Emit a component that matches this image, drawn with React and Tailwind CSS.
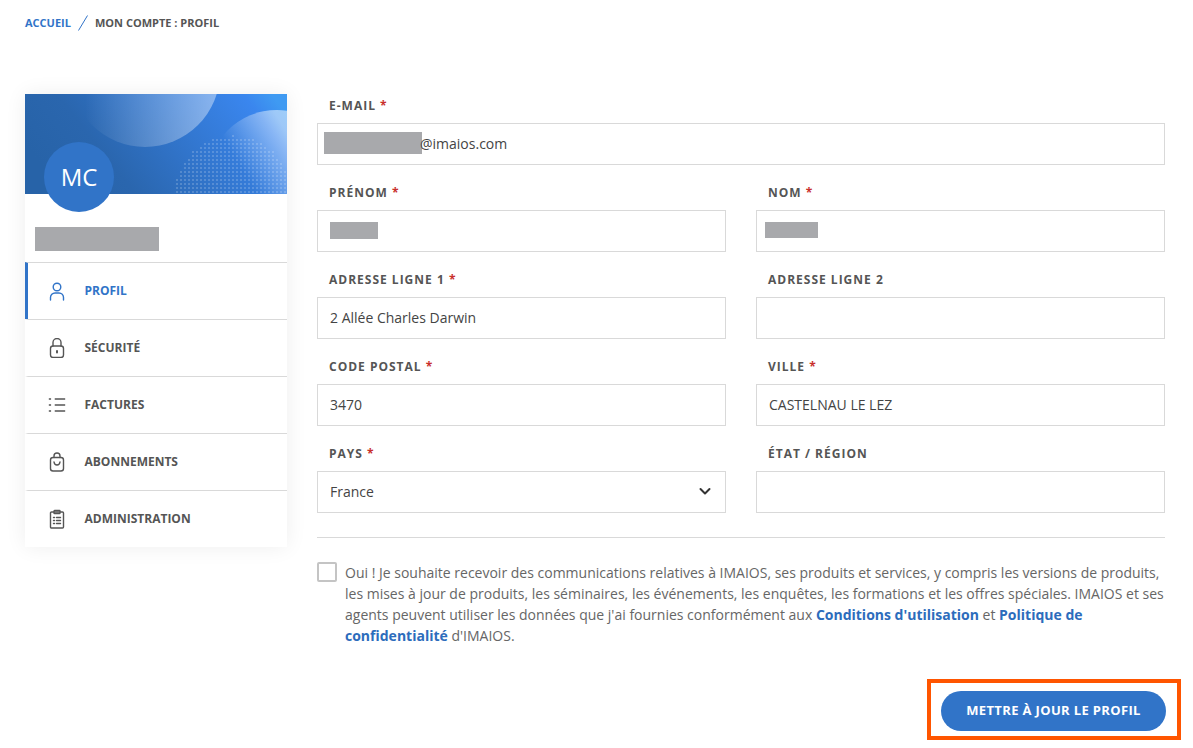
const font = { fontFamily: '"Open Sans", sans-serif' };

function Label({ children, required }) {
  return (
    <label className="block h-[17px] mb-[9px] ml-3 text-[12px] leading-[17px] font-bold tracking-[1px] text-[#555]">
      {children}
      {required && <span className="text-[#c9302c]"> *</span>}
    </label>
  );
}

function Field({ label, required, value, children, className = "" }) {
  return (
    <div className={className}>
      <Label required={required}>{label}</Label>
      <div className="flex items-center justify-between h-[42px] border border-[#d9d9d9] pl-3 pr-[13px] pb-[2px] text-[14px] text-[#444]">
        {value}
        {children}
      </div>
    </div>
  );
}

function Redacted({ className }) {
  return <span className={"block bg-[#a8a9ac] " + className} />;
}

function Banner() {
  const dots = [];
  for (let x = 177; x <= 287; x += 4) {
    for (let y = 136; y <= 194; y += 4) {
      const dx = x - 233;
      const dy = y - 194;
      if (dx * dx + dy * dy <= 58 * 58) {
        dots.push(<circle key={x + "-" + y} cx={x - 25} cy={y - 94} r="0.7" fill="#fff" fillOpacity="0.5" />);
      }
    }
  }
  return (
    <svg width="262" height="100" viewBox="0 0 262 100" className="block">
      <defs>
        <linearGradient id="bg" x1="0" y1="0.5" x2="1" y2="0.2">
          <stop offset="0" stopColor="#2763a8" />
          <stop offset="0.25" stopColor="#2a66ae" />
          <stop offset="0.9" stopColor="#3a86ee" />
          <stop offset="1" stopColor="#3f9af2" />
        </linearGradient>
        <linearGradient id="c1" x1="0" y1="0" x2="1" y2="0">
          <stop offset="0.1" stopColor="#fff" stopOpacity="0" />
          <stop offset="1" stopColor="#fff" stopOpacity="0.42" />
        </linearGradient>
        <linearGradient id="c2" x1="0" y1="0.8" x2="1" y2="0.2">
          <stop offset="0.35" stopColor="#fff" stopOpacity="0" />
          <stop offset="0.7" stopColor="#fff" stopOpacity="0.5" />
        </linearGradient>
      </defs>
      <rect width="262" height="100" fill="url(#bg)" />
      <circle cx="120" cy="-22" r="75" fill="url(#c1)" />
      <circle cx="252" cy="86" r="70" fill="url(#c2)" />
      {dots}
    </svg>
  );
}

const IconProps = {
  width: 20,
  height: 20,
  viewBox: "0 0 20 20",
  fill: "none",
  stroke: "currentColor",
  strokeWidth: 1.4,
  strokeLinecap: "round",
  strokeLinejoin: "round",
};

const menu = [
  {
    name: "PROFIL",
    icon: (
      <svg {...IconProps}>
        <circle cx="10" cy="6" r="3.800" />
        <path d="M3.500 19v-2.500a4.500 4.500 0 0 1 4.500-4.500h4a4.500 4.500 0 0 1 4.500 4.500V19" />
      </svg>
    ),
  },
  {
    name: "SÉCURITÉ",
    icon: (
      <svg {...IconProps}>
        <rect x="3.500" y="8" width="13" height="11.500" rx="2.500" />
        <path d="M6 8V4.500a4 4 0 0 1 8 0V8" />
        <path d="M10 13v1.500" strokeWidth="2" />
      </svg>
    ),
  },
  {
    name: "FACTURES",
    icon: (
      <svg {...IconProps} width="22" viewBox="0 0 22 20">
        <path d="M8.500 3.500H20M8.500 10H20M8.500 16.500H20" strokeWidth="1.700" strokeLinecap="butt" />
        <path d="M2 3.500h2.500M2 10h2.500M2 16.500h2.500" strokeWidth="1.700" strokeLinecap="butt" />
      </svg>
    ),
  },
  {
    name: "ABONNEMENTS",
    icon: (
      <svg {...IconProps}>
        <rect x="3.500" y="5.500" width="13" height="13.500" rx="2.500" />
        <path d="M7 5.500V4a3 3 0 0 1 6 0v1.500" />
        <path d="M7 10c.5 4 5.500 4 6 0" />
      </svg>
    ),
  },
  {
    name: "ADMINISTRATION",
    icon: (
      <svg {...IconProps}>
        <rect x="3.500" y="3" width="13" height="16" rx="1" />
        <rect x="7" y="1.500" width="6" height="3" rx="0.500" />
        <path d="M6.500 8.500h1M6.500 11.500h1M6.500 14.500h1M9.500 8.500h4M9.500 11.500h4M9.500 14.500h4" />
      </svg>
    ),
  },
];

function Sidebar() {
  return (
    <aside className="w-[262px] h-[453px] shrink-0 bg-white shadow-[0_0_20px_rgba(0,0,0,0.07)]">
      <div className="h-[100px] overflow-hidden">
        <Banner />
      </div>
      <div className="h-[68px] px-[10px] pt-[33px]">
        <Redacted className="w-[124px] h-[24px]" />
      </div>
      {menu.map((item, i) => (
        <div
          key={item.name}
          className={
            "flex items-center h-[57px] border-t border-[#d9d9d9] text-[12px] font-bold " +
            (i === 0 ? "border-l-[3px] border-l-[#3174c8] text-[#3174c8]" : "border-l-[3px] border-l-transparent text-[#555]")
          }
        >
          <span className="w-[20px] ml-[19px] flex justify-center">{item.icon}</span>
          <span className="ml-[17.5px]">{item.name}</span>
        </div>
      ))}
    </aside>
  );
}

export default function App() {
  return (
    <div style={font} className="relative w-[1193px] h-[748px] overflow-hidden bg-white pl-[25px]">
      <nav className="flex items-center h-[46px] text-[11px] font-bold">
        <a className="text-[#3174c8]">ACCUEIL</a>
        <svg width="10" height="16" viewBox="0 0 10 16" className="mx-[7px]">
          <path d="M0.500 15.500L9.500 0.500" stroke="#3174c8" strokeWidth="1" />
        </svg>
        <span className="text-[#555]">MON COMPTE : PROFIL</span>
      </nav>

      <div className="flex gap-[30px] pt-[48px]">
        <div className="relative">
          <Sidebar />
          <div className="absolute left-[19px] top-[48px] w-[70px] h-[70px] rounded-full bg-[#3174c8] flex items-center justify-center text-white text-[24px]">
            MC
          </div>
        </div>

        <form className="w-[848px] mt-[3px]">
          <div className="grid grid-cols-2 gap-x-[30px] gap-y-[19px]">
            <div className="col-span-2">
              <Label required>E-MAIL</Label>
              <div className="flex items-center h-[42px] border border-[#d9d9d9] pl-[6px] pb-[2px] text-[14px] text-[#444]">
                <Redacted className="w-[98px] h-[22px]" />
                <span className="-ml-[2px]">@imaios.com</span>
              </div>
            </div>
            <Field label="PRÉNOM" required value={<Redacted className="w-[48px] h-[17px]" />} />
            <Field label="NOM" required value={<Redacted className="w-[53px] h-[16px] -ml-[4px]" />} />
            <Field label="ADRESSE LIGNE 1" required value="2 Allée Charles Darwin" />
            <Field label="ADRESSE LIGNE 2" />
            <Field label="CODE POSTAL" required value="3470" />
            <Field label="VILLE" required value="CASTELNAU LE LEZ" />
            <Field label="PAYS" required value="France">
              <svg width="14" height="14" viewBox="0 0 14 14" fill="none" stroke="#333" strokeWidth="2" strokeLinecap="round" strokeLinejoin="round">
                <path d="M2.500 5l4.500 4.500L11.500 5" />
              </svg>
            </Field>
            <Field label="ÉTAT / RÉGION" />
          </div>

          <div className="mt-[24px] border-t border-[#d9d9d9]" />

          <div className="flex mt-[24px]">
            <span className="block w-[20px] h-[20px] shrink-0 rounded-[2px] border-2 border-[#c4c4c4]" />
            <p className="ml-[8px] w-[822px] text-[14px] leading-[21px] text-[#666]">
              Oui ! Je souhaite recevoir des communications relatives à IMAIOS, ses produits et services, y compris les versions de produits, les mises à jour de produits, les séminaires, les événements, les enquêtes, les formations et les offres spéciales. IMAIOS et ses agents peuvent utiliser les données que j'ai fournies conformément aux{" "}
              <a className="font-bold text-[#2c6cbc]">Conditions d'utilisation</a> et{" "}
              <a className="font-bold text-[#2c6cbc]">Politique de confidentialité</a> d'IMAIOS.
            </p>
          </div>

          <div className="flex justify-end mt-[45px]">
            <button type="button" className="relative w-[225px] h-[40px] -mr-[1px] rounded-full bg-[#3174c8] text-white text-[13px] font-bold tracking-[0.35px]">
              METTRE À JOUR LE PROFIL
              <span className="absolute -left-[14px] -top-[12px] w-[254px] h-[61px] border-[4px] border-[#ff5500]" />
            </button>
          </div>
        </form>
      </div>
    </div>
  );
}
